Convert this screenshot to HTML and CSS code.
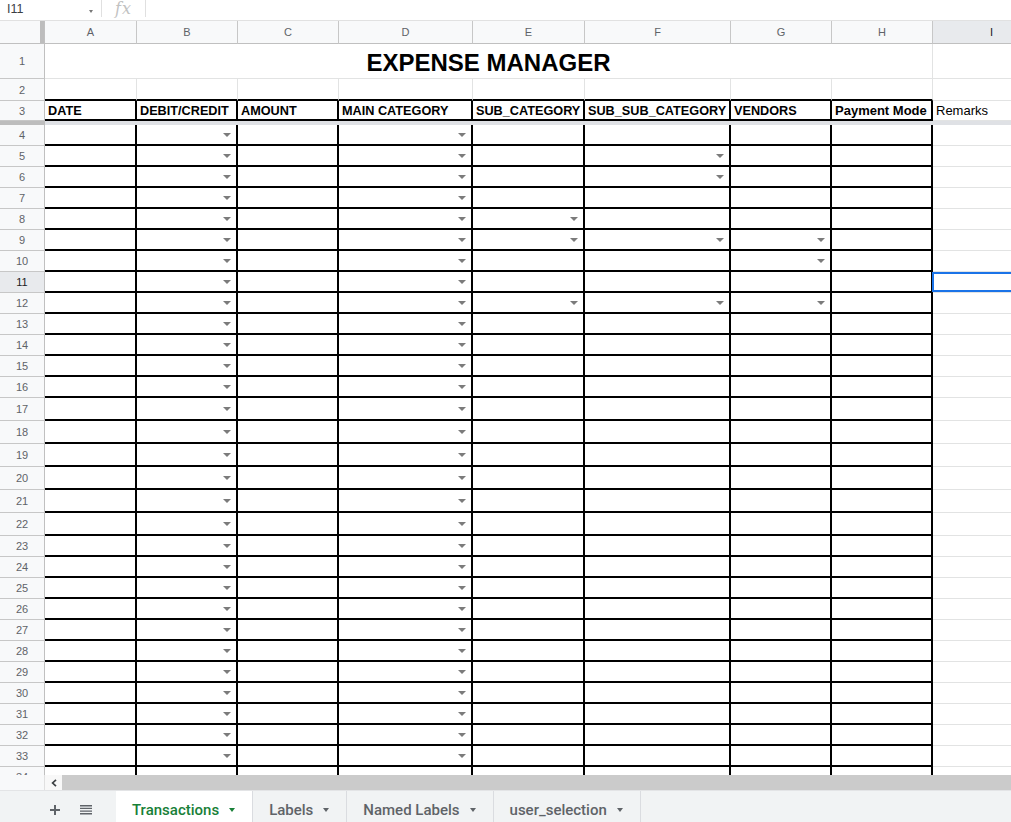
FILE: index.html
```html
<!DOCTYPE html>
<html lang="en">
<head>
<meta charset="utf-8">
<title>Expense Manager</title>
<link rel="stylesheet" href="styles.css">
</head>
<body>
<div class="app">
  <div class="fbar">
    <div class="namebox"><span class="ref">I11</span><i class="nb-ar"></i></div>
    <span class="sep"></span>
    <div class="fx">fx</div>
    <span class="sep"></span>
    <div class="finput"></div>
  </div>

  <div class="sheet">
    <div class="row colhead"><span class="corner"></span><span class="ch">A</span><span class="ch">B</span><span class="ch">C</span><span class="ch">D</span><span class="ch">E</span><span class="ch">F</span><span class="ch">G</span><span class="ch">H</span><span class="ch sel">I</span></div>
    <div class="row r1"><span class="rh">1</span><span class="title">EXPENSE MANAGER</span><span class="g"></span></div>
    <div class="row r2"><span class="rh">2</span><span class="t2"></span><span class="t2"></span><span class="t2"></span><span class="t2"></span><span class="t2"></span><span class="t2"></span><span class="t2"></span><span class="t2"></span><span class="g"></span></div>
    <div class="row r3"><span class="rh">3</span><span class="k hd">DATE</span><span class="k hd">DEBIT/CREDIT</span><span class="k hd">AMOUNT</span><span class="k hd">MAIN CATEGORY</span><span class="k hd">SUB_CATEGORY</span><span class="k hd">SUB_SUB_CATEGORY</span><span class="k hd">VENDORS</span><span class="k hd pm">Payment Mode</span><span class="g rem">Remarks</span></div>
    <div class="freeze"></div>

    <div class="row"><span class="rh">4</span><span class="k"></span><span class="k"><i class="dd"></i></span><span class="k"></span><span class="k"><i class="dd"></i></span><span class="k"></span><span class="k"></span><span class="k"></span><span class="k"></span><span class="g"></span></div>
    <div class="row"><span class="rh">5</span><span class="k"></span><span class="k"><i class="dd"></i></span><span class="k"></span><span class="k"><i class="dd"></i></span><span class="k"></span><span class="k"><i class="dd"></i></span><span class="k"></span><span class="k"></span><span class="g"></span></div>
    <div class="row"><span class="rh">6</span><span class="k"></span><span class="k"><i class="dd"></i></span><span class="k"></span><span class="k"><i class="dd"></i></span><span class="k"></span><span class="k"><i class="dd"></i></span><span class="k"></span><span class="k"></span><span class="g"></span></div>
    <div class="row"><span class="rh">7</span><span class="k"></span><span class="k"><i class="dd"></i></span><span class="k"></span><span class="k"><i class="dd"></i></span><span class="k"></span><span class="k"></span><span class="k"></span><span class="k"></span><span class="g"></span></div>
    <div class="row"><span class="rh">8</span><span class="k"></span><span class="k"><i class="dd"></i></span><span class="k"></span><span class="k"><i class="dd"></i></span><span class="k"><i class="dd"></i></span><span class="k"></span><span class="k"></span><span class="k"></span><span class="g"></span></div>
    <div class="row"><span class="rh">9</span><span class="k"></span><span class="k"><i class="dd"></i></span><span class="k"></span><span class="k"><i class="dd"></i></span><span class="k"><i class="dd"></i></span><span class="k"><i class="dd"></i></span><span class="k"><i class="dd"></i></span><span class="k"></span><span class="g"></span></div>
    <div class="row"><span class="rh">10</span><span class="k"></span><span class="k"><i class="dd"></i></span><span class="k"></span><span class="k"><i class="dd"></i></span><span class="k"></span><span class="k"></span><span class="k"><i class="dd"></i></span><span class="k"></span><span class="g"></span></div>
    <div class="row"><span class="rh sel">11</span><span class="k"></span><span class="k"><i class="dd"></i></span><span class="k"></span><span class="k"><i class="dd"></i></span><span class="k"></span><span class="k"></span><span class="k"></span><span class="k"></span><span class="g cur"></span></div>
    <div class="row"><span class="rh">12</span><span class="k"></span><span class="k"><i class="dd"></i></span><span class="k"></span><span class="k"><i class="dd"></i></span><span class="k"><i class="dd"></i></span><span class="k"><i class="dd"></i></span><span class="k"><i class="dd"></i></span><span class="k"></span><span class="g"></span></div>
    <div class="row"><span class="rh">13</span><span class="k"></span><span class="k"><i class="dd"></i></span><span class="k"></span><span class="k"><i class="dd"></i></span><span class="k"></span><span class="k"></span><span class="k"></span><span class="k"></span><span class="g"></span></div>
    <div class="row"><span class="rh">14</span><span class="k"></span><span class="k"><i class="dd"></i></span><span class="k"></span><span class="k"><i class="dd"></i></span><span class="k"></span><span class="k"></span><span class="k"></span><span class="k"></span><span class="g"></span></div>
    <div class="row"><span class="rh">15</span><span class="k"></span><span class="k"><i class="dd"></i></span><span class="k"></span><span class="k"><i class="dd"></i></span><span class="k"></span><span class="k"></span><span class="k"></span><span class="k"></span><span class="g"></span></div>
    <div class="row"><span class="rh">16</span><span class="k"></span><span class="k"><i class="dd"></i></span><span class="k"></span><span class="k"><i class="dd"></i></span><span class="k"></span><span class="k"></span><span class="k"></span><span class="k"></span><span class="g"></span></div>
    <div class="row t"><span class="rh">17</span><span class="k"></span><span class="k"><i class="dd"></i></span><span class="k"></span><span class="k"><i class="dd"></i></span><span class="k"></span><span class="k"></span><span class="k"></span><span class="k"></span><span class="g"></span></div>
    <div class="row t"><span class="rh">18</span><span class="k"></span><span class="k"><i class="dd"></i></span><span class="k"></span><span class="k"><i class="dd"></i></span><span class="k"></span><span class="k"></span><span class="k"></span><span class="k"></span><span class="g"></span></div>
    <div class="row t"><span class="rh">19</span><span class="k"></span><span class="k"><i class="dd"></i></span><span class="k"></span><span class="k"><i class="dd"></i></span><span class="k"></span><span class="k"></span><span class="k"></span><span class="k"></span><span class="g"></span></div>
    <div class="row t"><span class="rh">20</span><span class="k"></span><span class="k"><i class="dd"></i></span><span class="k"></span><span class="k"><i class="dd"></i></span><span class="k"></span><span class="k"></span><span class="k"></span><span class="k"></span><span class="g"></span></div>
    <div class="row t"><span class="rh">21</span><span class="k"></span><span class="k"><i class="dd"></i></span><span class="k"></span><span class="k"><i class="dd"></i></span><span class="k"></span><span class="k"></span><span class="k"></span><span class="k"></span><span class="g"></span></div>
    <div class="row t"><span class="rh">22</span><span class="k"></span><span class="k"><i class="dd"></i></span><span class="k"></span><span class="k"><i class="dd"></i></span><span class="k"></span><span class="k"></span><span class="k"></span><span class="k"></span><span class="g"></span></div>
    <div class="row"><span class="rh">23</span><span class="k"></span><span class="k"><i class="dd"></i></span><span class="k"></span><span class="k"><i class="dd"></i></span><span class="k"></span><span class="k"></span><span class="k"></span><span class="k"></span><span class="g"></span></div>
    <div class="row"><span class="rh">24</span><span class="k"></span><span class="k"><i class="dd"></i></span><span class="k"></span><span class="k"><i class="dd"></i></span><span class="k"></span><span class="k"></span><span class="k"></span><span class="k"></span><span class="g"></span></div>
    <div class="row"><span class="rh">25</span><span class="k"></span><span class="k"><i class="dd"></i></span><span class="k"></span><span class="k"><i class="dd"></i></span><span class="k"></span><span class="k"></span><span class="k"></span><span class="k"></span><span class="g"></span></div>
    <div class="row"><span class="rh">26</span><span class="k"></span><span class="k"><i class="dd"></i></span><span class="k"></span><span class="k"><i class="dd"></i></span><span class="k"></span><span class="k"></span><span class="k"></span><span class="k"></span><span class="g"></span></div>
    <div class="row"><span class="rh">27</span><span class="k"></span><span class="k"><i class="dd"></i></span><span class="k"></span><span class="k"><i class="dd"></i></span><span class="k"></span><span class="k"></span><span class="k"></span><span class="k"></span><span class="g"></span></div>
    <div class="row"><span class="rh">28</span><span class="k"></span><span class="k"><i class="dd"></i></span><span class="k"></span><span class="k"><i class="dd"></i></span><span class="k"></span><span class="k"></span><span class="k"></span><span class="k"></span><span class="g"></span></div>
    <div class="row"><span class="rh">29</span><span class="k"></span><span class="k"><i class="dd"></i></span><span class="k"></span><span class="k"><i class="dd"></i></span><span class="k"></span><span class="k"></span><span class="k"></span><span class="k"></span><span class="g"></span></div>
    <div class="row"><span class="rh">30</span><span class="k"></span><span class="k"><i class="dd"></i></span><span class="k"></span><span class="k"><i class="dd"></i></span><span class="k"></span><span class="k"></span><span class="k"></span><span class="k"></span><span class="g"></span></div>
    <div class="row"><span class="rh">31</span><span class="k"></span><span class="k"><i class="dd"></i></span><span class="k"></span><span class="k"><i class="dd"></i></span><span class="k"></span><span class="k"></span><span class="k"></span><span class="k"></span><span class="g"></span></div>
    <div class="row"><span class="rh">32</span><span class="k"></span><span class="k"><i class="dd"></i></span><span class="k"></span><span class="k"><i class="dd"></i></span><span class="k"></span><span class="k"></span><span class="k"></span><span class="k"></span><span class="g"></span></div>
    <div class="row"><span class="rh">33</span><span class="k"></span><span class="k"><i class="dd"></i></span><span class="k"></span><span class="k"><i class="dd"></i></span><span class="k"></span><span class="k"></span><span class="k"></span><span class="k"></span><span class="g"></span></div>
    <div class="row"><span class="rh">34</span><span class="k"></span><span class="k"><i class="dd"></i></span><span class="k"></span><span class="k"><i class="dd"></i></span><span class="k"></span><span class="k"></span><span class="k"></span><span class="k"></span><span class="g"></span></div>
  </div>

  <div class="hscroll">
    <span class="hs-corner"></span>
    <span class="hs-btn"><svg width="6" height="8" viewBox="0 0 6 8"><path d="M5 0.8 L1.6 4 L5 7.2" fill="none" stroke="#3c4043" stroke-width="1.7"/></svg></span>
    <span class="hs-thumb"></span>
  </div>

  <div class="tabs">
    <div class="tools">
      <svg class="plus" width="10" height="10" viewBox="0 0 10 10"><path d="M5 0 V10 M0 5 H10" stroke="#5f6368" stroke-width="2" fill="none"/></svg>
      <svg class="list" width="12" height="10" viewBox="0 0 12 10"><path d="M0 0.7 H12 M0 3.4 H12 M0 6.1 H12 M0 8.8 H12" stroke="#5f6368" stroke-width="1.4" fill="none"/></svg>
    </div>
    <div class="tab on"><span>Transactions</span><i class="ar"></i></div>
    <div class="tab"><span>Labels</span><i class="ar"></i></div>
    <div class="tab"><span>Named Labels</span><i class="ar"></i></div>
    <div class="tab"><span>user_selection</span><i class="ar"></i></div>
  </div>
</div>
</body>
</html>
```

FILE: styles.css
```css
* { box-sizing: border-box; margin: 0; padding: 0; }
html, body { width: 1011px; height: 822px; overflow: hidden; background: #fff; }
body { font-family: "Liberation Sans", Arial, sans-serif; }

.app { display: flex; flex-direction: column; height: 822px; }

/* formula bar */
.fbar { height: 21px; flex: none; display: flex; border-bottom: 1px solid #e1e1e1; }
.namebox { width: 101px; display: flex; align-items: flex-start; padding: 2px 0 0 7px; font-size: 12.5px; color: #3c4043; }
.nb-ar { width: 0; height: 0; margin: 8px 8px 0 auto; border-left: 2.5px solid transparent; border-right: 2.5px solid transparent; border-top: 3px solid #777; }
.sep { width: 1px; height: 17px; background: #e0e0e0; flex: none; }
.fx { width: 43px; display: flex; justify-content: center; font: italic 16px "DejaVu Serif", serif; line-height: 17px; letter-spacing: 1px; color: #c2c2c2; }
.finput { flex: 1; }

/* grid */
.sheet { height: 754px; flex: none; overflow: hidden; }
.row { display: grid; grid-template-columns: 45px 92px 101px 101px 134px 112px 146px 101px 101px 118px; height: 21px; }
.row.t { height: 23px; }

.colhead { height: 23px; background: #f8f9fa; }
.corner { border-right: 1px solid #c0c0c0; border-bottom: 1px solid #c0c0c0; box-shadow: inset -4px 0 0 #bdbdbd; }
.ch { display: flex; align-items: center; justify-content: center; border-right: 1px solid #c7c7c7; border-bottom: 1px solid #c0c0c0; font-size: 11px; color: #5f6368; }
.ch.sel { background: #e8eaed; color: #202124; }

.rh { display: flex; align-items: center; justify-content: center; background: #f8f9fa; border-right: 1px solid #c0c0c0; border-bottom: 1px solid #c7c7c7; font-size: 11px; color: #5f6368; }
.rh.sel { background: #e8eaed; color: #202124; }

.g { display: flex; align-items: center; border-right: 1px solid #e2e3e3; border-bottom: 1px solid #e2e3e3; }
.k { display: flex; align-items: center; border-right: 2px solid #000; border-bottom: 2px solid #000; }
.t2 { border-right: 1px solid #e2e3e3; border-bottom: 2px solid #000; }

.r1 { height: 35px; }
.title { grid-column: span 8; display: flex; align-items: flex-end; justify-content: center; padding-bottom: 1px; border-right: 1px solid #e2e3e3; border-bottom: 1px solid #e2e3e3; font-size: 24px; font-weight: bold; color: #000; }
.r2 { height: 22px; }
.r3 { height: 20px; }
.hd { align-items: flex-end; padding: 0 0 1px 3px; font-size: 12.7px; font-weight: bold; color: #000; white-space: nowrap; overflow: hidden; }
.hd.pm { font-size: 13px; }
.rem { align-items: flex-end; padding: 0 0 2px 3px; font-size: 13px; color: #000; white-space: nowrap; }

.freeze { height: 4px; background: linear-gradient(to right, #bdbdbd 45px, #dfe1e5 45px); }

.dd { width: 0; height: 0; margin-left: auto; margin-right: 5px; border-left: 4px solid transparent; border-right: 4px solid transparent; border-top: 4px solid #7b7b7b; }

.cur { position: relative; }
.cur::after { content: ""; position: absolute; left: -1px; top: 0; right: 0; bottom: 0; border: 2px solid #1a73e8; }

/* horizontal scrollbar */
.hscroll { height: 15px; flex: none; display: flex; }
.hs-corner { width: 45px; background: #f8f9fa; border-right: 1px solid #e0e0e0; }
.hs-btn { width: 17px; display: flex; align-items: center; justify-content: center; background: #f8f8f8; }
.hs-thumb { flex: 1; background: #cbcbcb; }

/* sheet tabs */
.tabs { height: 32px; flex: none; display: flex; background: #f1f3f4; border-top: 1px solid #e3e4e6; font-family: Roboto, "Liberation Sans", sans-serif; font-size: 15px; font-weight: 500; }
.tools { width: 116px; display: flex; align-items: center; padding-top: 6px; }
.plus { margin-left: 50px; }
.list { margin-left: 20px; }
.tab { display: flex; align-items: center; padding: 6px 17px 0 16px; color: #5f6368; border-right: 1px solid #dadce0; white-space: nowrap; }
.tab.on { background: #fff; color: #188038; }
.ar { width: 0; height: 0; margin-left: 10px; border-left: 3.5px solid transparent; border-right: 3.5px solid transparent; border-top: 4px solid currentColor; }
```
